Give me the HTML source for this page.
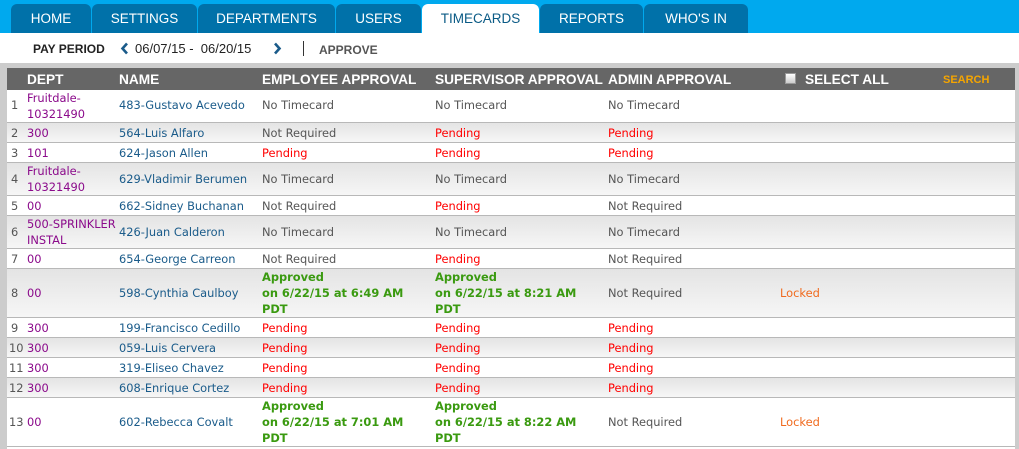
<!DOCTYPE html>
<html><head><meta charset="utf-8"><style>
*{margin:0;padding:0;box-sizing:border-box}
body{width:1019px;height:449px;overflow:hidden;background:#fff;font-family:"DejaVu Sans",Verdana,sans-serif;position:relative}
.nav{position:absolute;left:0;top:0;width:1019px;height:33px;background:#00a9ee}
.tab{position:absolute;top:4px;height:29px;background:#0071a9;color:#fff;border-radius:6px 6px 0 0;font-family:"Liberation Sans",Arial,sans-serif;font-size:13.5px;text-align:center;line-height:30px}
.tab.on{background:#fff;color:#0a5a85}
.sub{position:absolute;top:41px;font-family:"Liberation Sans",Arial,sans-serif;font-size:13px;color:#222}
.frame{position:absolute;left:0;top:63px;width:1019px;height:386px;background:#ccc}
.tbl{position:absolute;left:7px;top:68px;width:1008px;height:381px;background:#fff}
.hd{position:absolute;left:7px;top:68px;width:1008px;height:22px;background:#666}
.h{position:absolute;top:72px;color:#fff;font-family:"Liberation Sans",Arial,sans-serif;font-weight:bold;font-size:13.7px}
.row{position:absolute;left:7px;width:1008px;border-bottom:1px solid #b8b8b8}
.row.g{background:linear-gradient(#e4e4e4,#f6f6f6)}
.c{position:absolute;font-size:11.4px;line-height:16px;color:#555;white-space:nowrap}
.i{left:4px;color:#555}.d{left:20px;color:#8b0a8b}.n{left:112px;color:#1a5b8a}
.e{left:255px}.s{left:428px}.a{left:601px}.l{left:773px;color:#f06a1e}
.p{color:#f00}.ap{color:#3a9a10;font-weight:bold}
.chev{position:absolute;top:42px}
</style></head><body>
<div class="nav"></div>
<div class="tab" style="left:11px;width:80px">HOME</div>
<div class="tab" style="left:92px;width:105px">SETTINGS</div>
<div class="tab" style="left:198px;width:137px">DEPARTMENTS</div>
<div class="tab" style="left:336px;width:85px">USERS</div>
<div class="tab on" style="left:422px;width:117px">TIMECARDS</div>
<div class="tab" style="left:540px;width:103px">REPORTS</div>
<div class="tab" style="left:644px;width:104px">WHO'S IN</div>
<div class="sub" style="left:33px;font-weight:bold;font-size:12px;top:42px">PAY PERIOD</div>
<svg class="chev" style="left:120px" width="9" height="13" viewBox="0 0 9 13"><path d="M7 1.5 L2.5 6.5 L7 11.5" fill="none" stroke="#1a5b8a" stroke-width="2.6"/></svg>
<div class="sub" style="left:135px;font-size:13px">06/07/15 -&nbsp; 06/20/15</div>
<svg class="chev" style="left:273px" width="9" height="13" viewBox="0 0 9 13"><path d="M2 1.5 L6.5 6.5 L2 11.5" fill="none" stroke="#1a5b8a" stroke-width="2.6"/></svg>
<div style="position:absolute;left:303px;top:41px;width:1px;height:15px;background:#333"></div>
<div class="sub" style="left:319px;font-weight:bold;font-size:12px;color:#555;top:43px">APPROVE</div>
<div class="frame"></div><div class="tbl"></div><div class="hd"></div>
<div class="h" style="left:27px">DEPT</div>
<div class="h" style="left:119px">NAME</div>
<div class="h" style="left:262px">EMPLOYEE APPROVAL</div>
<div class="h" style="left:435px">SUPERVISOR APPROVAL</div>
<div class="h" style="left:608px">ADMIN APPROVAL</div>
<div style="position:absolute;left:785px;top:73px;width:11px;height:11px;border:1px solid #999;background:linear-gradient(#fff,#ccc)"></div>
<div class="h" style="left:805px">SELECT ALL</div>
<div class="h" style="left:943px;color:#f5a500;font-size:11px;top:74px">SEARCH</div>

<div class="row" style="top:90px;height:33px"><span class="c i" style="top:7px">1</span><span class="c d" style="top:0">Fruitdale-<br>10321490</span><span class="c n" style="top:7px">483-Gustavo Acevedo</span><span class="c e" style="top:7px">No Timecard</span><span class="c s" style="top:7px">No Timecard</span><span class="c a" style="top:7px">No Timecard</span></div>
<div class="row g" style="top:123px;height:20px"><span class="c i" style="top:2px">2</span><span class="c d" style="top:2px">300</span><span class="c n" style="top:2px">564-Luis Alfaro</span><span class="c e" style="top:2px">Not Required</span><span class="c s p" style="top:2px">Pending</span><span class="c a p" style="top:2px">Pending</span></div>
<div class="row" style="top:143px;height:20px"><span class="c i" style="top:2px">3</span><span class="c d" style="top:2px">101</span><span class="c n" style="top:2px">624-Jason Allen</span><span class="c e p" style="top:2px">Pending</span><span class="c s p" style="top:2px">Pending</span><span class="c a p" style="top:2px">Pending</span></div>
<div class="row g" style="top:163px;height:33px"><span class="c i" style="top:8px">4</span><span class="c d" style="top:0">Fruitdale-<br>10321490</span><span class="c n" style="top:8px">629-Vladimir Berumen</span><span class="c e" style="top:8px">No Timecard</span><span class="c s" style="top:8px">No Timecard</span><span class="c a" style="top:8px">No Timecard</span></div>
<div class="row" style="top:196px;height:20px"><span class="c i" style="top:2px">5</span><span class="c d" style="top:2px">00</span><span class="c n" style="top:2px">662-Sidney Buchanan</span><span class="c e" style="top:2px">Not Required</span><span class="c s p" style="top:2px">Pending</span><span class="c a" style="top:2px">Not Required</span></div>
<div class="row g" style="top:216px;height:33px"><span class="c i" style="top:8px">6</span><span class="c d" style="top:0">500-SPRINKLER<br>INSTAL</span><span class="c n" style="top:8px">426-Juan Calderon</span><span class="c e" style="top:8px">No Timecard</span><span class="c s" style="top:8px">No Timecard</span><span class="c a" style="top:8px">No Timecard</span></div>
<div class="row" style="top:249px;height:20px"><span class="c i" style="top:2px">7</span><span class="c d" style="top:2px">00</span><span class="c n" style="top:2px">654-George Carreon</span><span class="c e" style="top:2px">Not Required</span><span class="c s p" style="top:2px">Pending</span><span class="c a" style="top:2px">Not Required</span></div>
<div class="row g" style="top:269px;height:49px"><span class="c i" style="top:16px">8</span><span class="c d" style="top:16px">00</span><span class="c n" style="top:16px">598-Cynthia Caulboy</span><span class="c e ap" style="top:0">Approved<br>on 6/22/15 at 6:49 AM<br>PDT</span><span class="c s ap" style="top:0">Approved<br>on 6/22/15 at 8:21 AM<br>PDT</span><span class="c a" style="top:16px">Not Required</span><span class="c l" style="top:16px">Locked</span></div>
<div class="row" style="top:318px;height:20px"><span class="c i" style="top:2px">9</span><span class="c d" style="top:2px">300</span><span class="c n" style="top:2px">199-Francisco Cedillo</span><span class="c e p" style="top:2px">Pending</span><span class="c s p" style="top:2px">Pending</span><span class="c a p" style="top:2px">Pending</span></div>
<div class="row g" style="top:338px;height:20px"><span class="c i" style="top:2px;left:2px">10</span><span class="c d" style="top:2px">300</span><span class="c n" style="top:2px">059-Luis Cervera</span><span class="c e p" style="top:2px">Pending</span><span class="c s p" style="top:2px">Pending</span><span class="c a p" style="top:2px">Pending</span></div>
<div class="row" style="top:358px;height:20px"><span class="c i" style="top:2px;left:2px">11</span><span class="c d" style="top:2px">300</span><span class="c n" style="top:2px">319-Eliseo Chavez</span><span class="c e p" style="top:2px">Pending</span><span class="c s p" style="top:2px">Pending</span><span class="c a p" style="top:2px">Pending</span></div>
<div class="row g" style="top:378px;height:20px"><span class="c i" style="top:2px;left:2px">12</span><span class="c d" style="top:2px">300</span><span class="c n" style="top:2px">608-Enrique Cortez</span><span class="c e p" style="top:2px">Pending</span><span class="c s p" style="top:2px">Pending</span><span class="c a p" style="top:2px">Pending</span></div>
<div class="row" style="top:398px;height:49px"><span class="c i" style="top:16px;left:2px">13</span><span class="c d" style="top:16px">00</span><span class="c n" style="top:16px">602-Rebecca Covalt</span><span class="c e ap" style="top:0">Approved<br>on 6/22/15 at 7:01 AM<br>PDT</span><span class="c s ap" style="top:0">Approved<br>on 6/22/15 at 8:22 AM<br>PDT</span><span class="c a" style="top:16px">Not Required</span><span class="c l" style="top:16px">Locked</span></div>
</body></html>
